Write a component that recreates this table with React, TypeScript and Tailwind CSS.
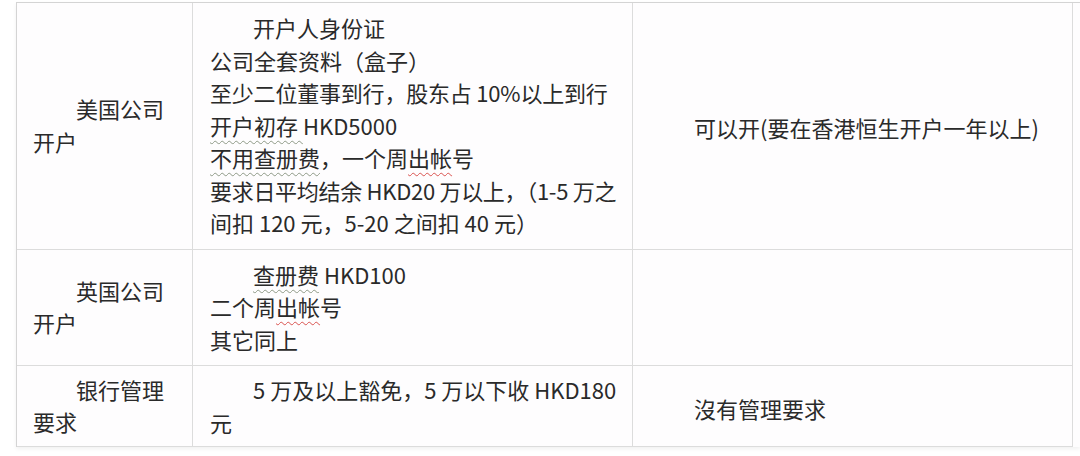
import React from "react";

const font = { fontFamily: '"Noto Sans CJK SC", "Noto Sans", sans-serif' };

function Wavy({ children, red }: { children: React.ReactNode; red?: boolean }) {
  return (
    <span
      className={
        red
          ? "underline decoration-wavy decoration-[#d9534f] decoration-1 underline-offset-[5px]"
          : "underline decoration-wavy decoration-[#8e9a86] decoration-1 underline-offset-[5px]"
      }
    >
      {children}
    </span>
  );
}

function Cell({ children }: { children: React.ReactNode }) {
  return (
    <div className="border-b border-r border-[#dcdcdc] pl-[17px] pr-2 pt-[8px] pb-[10px]">
      {children}
    </div>
  );
}

function Label({ a, b }: { a: string; b: string }) {
  return (
    <div className="border-b border-r border-[#dcdcdc] pl-[16px] flex flex-col justify-center pb-[2px]">
      <div className="pl-[43px]">{a}</div>
      <div>{b}</div>
    </div>
  );
}

export default function App() {
  return (
    <div className="w-[1080px] h-[456px] bg-white overflow-hidden" style={font}>
      <div className="pt-[2px] pl-[16px]">
        <div className="grid grid-cols-[176px_440px_440px] border-l border-t border-[#d4d4d4] bg-[#fefdfe] text-[22px] leading-[32.5px] text-[#2a2a2a] shadow-[0_2px_4px_rgba(0,0,0,0.06)]">
          {/* Row 1 */}
          <Label a="美国公司" b="开户" />
          <Cell>
            <div className="pl-[43px]">开户人身份证</div>
            <div>公司全套资料（盒子）</div>
            <div className="tracking-[-0.2px]">至少二位董事到行，股东占 10%以上到行</div>
            <div>
              <Wavy>开户初存 </Wavy>HKD5000
            </div>
            <div>
              <Wavy>不用查册费</Wavy>，一个周<Wavy red>出帐</Wavy>号
            </div>
            <div className="tracking-[-0.3px]">要求日平均结余 HKD20 万以上，（1-5 万之</div>
            <div>间扣 120 元，5-20 之间扣 40 元）</div>
          </Cell>
          <div className="border-b border-r border-[#dcdcdc] pl-[61px] flex flex-col justify-center pt-[2px]">
            <div>可以开(要在香港恒生开户一年以上)</div>
          </div>

          {/* Row 2 */}
          <Label a="英国公司" b="开户" />
          <Cell>
            <div className="pl-[43px]">
              <Wavy>查册费</Wavy> HKD100
            </div>
            <div>
              二个周<Wavy red>出帐</Wavy>号
            </div>
            <div>其它同上</div>
          </Cell>
          <div className="border-b border-r border-[#dcdcdc]"></div>

          {/* Row 3 */}
          <Label a="银行管理" b="要求" />
          <div className="border-b border-r border-[#dcdcdc] pl-[17px] pt-[7px] pb-[8px]">
            <div className="pl-[43px]">5 万及以上豁免，5 万以下收 HKD180</div>
            <div>元</div>
          </div>
          <div className="border-b border-r border-[#dcdcdc] pl-[61px] flex flex-col justify-center pt-[4px]">
            <div>沒有管理要求</div>
          </div>
        </div>
      </div>
    </div>
  );
}
